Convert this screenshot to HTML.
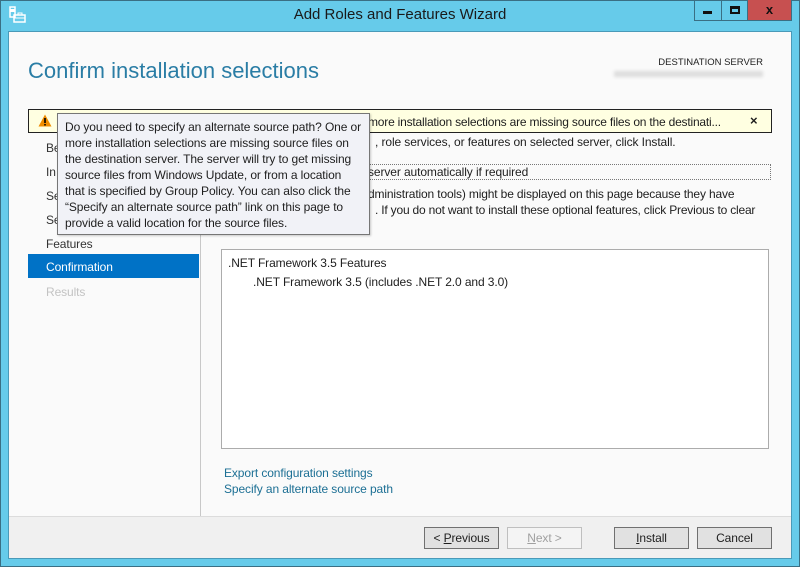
<!DOCTYPE html>
<html><head><meta charset="utf-8"><style>
*{margin:0;padding:0;box-sizing:border-box}
body{width:800px;height:567px;overflow:hidden;font-family:"Liberation Sans",sans-serif;font-size:12px;color:#1e1e1e;position:relative;background:#66cbea;letter-spacing:-0.1px}
.a{position:absolute;white-space:nowrap}
.frame{position:absolute;left:0;top:0;width:800px;height:567px;border:1px solid #3a6f84;background:#66cbea}
.client{position:absolute;left:8px;top:31px;width:784px;height:528px;background:#fafafa;border:1px solid #4a9ab8}
.footer{position:absolute;left:9px;top:516px;width:782px;height:42px;background:#f0f0f0;border-top:1px solid #dcdcdc}
.btn{position:absolute;top:527px;height:22px;width:75px;border:1px solid #707070;background:#e1e1e1;text-align:center;line-height:20px;font-size:12px}
.nav{position:absolute;left:46px;font-size:12px;color:#333}
.link{color:#1c6f94}
</style></head><body>
<div class="frame"></div>
<svg class="a" style="left:9px;top:6px" width="18" height="18" viewBox="0 0 18 18"><rect x="1" y="1" width="5" height="10" fill="none" stroke="#fff" stroke-width="1.5"/><rect x="1" y="3" width="5" height="3" fill="#fff"/><rect x="5" y="9" width="11" height="7" fill="none" stroke="#fff" stroke-width="1.5"/><rect x="9" y="7" width="4" height="2" fill="none" stroke="#fff"/><line x1="5" y1="12" x2="16" y2="12" stroke="#fff"/></svg>
<div class="a" style="left:0;width:800px;top:6px;text-align:center;font-size:15px;color:#1a1a1a;letter-spacing:0">Add Roles and Features Wizard</div>
<div class="a" style="left:694px;top:0;width:28px;height:21px;border:1px solid #3a6f84;border-top:none"></div>
<div class="a" style="left:703px;top:11px;width:9px;height:3px;background:#111"></div>
<div class="a" style="left:721px;top:0;width:27px;height:21px;border:1px solid #3a6f84;border-top:none"></div>
<div class="a" style="left:730px;top:6px;width:10px;height:8px;border:2px solid #111;border-top-width:3px"></div>
<div class="a" style="left:747px;top:0;width:45px;height:21px;background:#c75050;border:1px solid #3a6f84;border-top:none;text-align:center;font-weight:bold;font-size:13px;line-height:20px;color:#111">x</div>
<div class="client"></div>
<div class="a" style="left:28px;top:58px;font-size:22px;color:#2a7da5;letter-spacing:0">Confirm installation selections</div>
<div class="a" style="right:37px;top:57px;font-size:9.5px;color:#222;letter-spacing:0">DESTINATION SERVER</div>
<div class="a" style="left:614px;top:71px;width:149px;height:6px;background:#ddd;filter:blur(1.5px)"></div>
<div class="a" style="left:28px;top:109px;width:744px;height:24px;background:#ffffe1;border:1px solid #222"></div>
<svg class="a" style="left:38px;top:114px" width="14" height="13" viewBox="0 0 14 13"><path d="M7 0.5L13.5 12.5H0.5Z" fill="#f08c00"/><rect x="6.2" y="4" width="1.6" height="5" fill="#000"/><rect x="6.2" y="10" width="1.6" height="1.5" fill="#000"/></svg>
<div class="a" style="left:368px;top:115px;letter-spacing:-0.2px">more installation selections are missing source files on the destinati...</div>
<div class="a" style="left:750px;top:113px;font-weight:bold;font-size:13px">×</div>
<div class="a" style="left:375px;top:135px">, role services, or features on selected server, click Install.</div>
<div class="a" style="left:220px;top:164px;width:551px;height:16px;border:1px dotted #777"></div>
<div class="a" style="left:368px;top:165px">server automatically if required</div>
<div class="a" style="left:368px;top:187px;letter-spacing:-0.15px">dministration tools) might be displayed on this page because they have</div>
<div class="a" style="left:375px;top:203px;letter-spacing:-0.2px">. If you do not want to install these optional features, click Previous to clear</div>
<div class="a" style="left:200px;top:140px;width:1px;height:376px;background:#c8c8c8"></div>
<div class="nav" style="top:141px">Be</div>
<div class="nav" style="top:165px">In</div>
<div class="nav" style="top:189px">Se</div>
<div class="nav" style="top:213px">Se</div>
<div class="nav" style="top:237px">Features</div>
<div class="a" style="left:28px;top:254px;width:171px;height:24px;background:#0072c6"></div>
<div class="nav" style="top:260px;color:#fff">Confirmation</div>
<div class="nav" style="top:285px;color:#c3c3c3">Results</div>
<div class="a" style="left:221px;top:249px;width:548px;height:200px;background:#fff;border:1px solid #acacac"></div>
<div class="a" style="left:228px;top:256px">.NET Framework 3.5 Features</div>
<div class="a" style="left:253px;top:275px">.NET Framework 3.5 (includes .NET 2.0 and 3.0)</div>
<div class="a link" style="left:224px;top:466px">Export configuration settings</div>
<div class="a link" style="left:224px;top:482px">Specify an alternate source path</div>
<div class="a" style="left:57px;top:113px;width:313px;height:122px;background:#f1f2f7;border:1px solid #767676;box-shadow:1px 1px 2px rgba(0,0,0,.2)"></div>
<div class="a" style="left:65px;top:119px;line-height:16px;font-size:12px;letter-spacing:-0.1px;color:#1e1e1e">Do you need to specify an alternate source path? One or<br>more installation selections are missing source files on<br>the destination server. The server will try to get missing<br>source files from Windows Update, or from a location<br>that is specified by Group Policy. You can also click the<br>“Specify an alternate source path” link on this page to<br>provide a valid location for the source files.</div>
<div class="footer"></div>
<div class="btn" style="left:424px"><span>&lt; <u>P</u>revious</span></div>
<div class="btn" style="left:507px;border-color:#bfbfbf;background:#f4f4f4;color:#a0a0a0"><u>N</u>ext &gt;</div>
<div class="btn" style="left:614px"><u>I</u>nstall</div>
<div class="btn" style="left:697px">Cancel</div>
</body></html>
